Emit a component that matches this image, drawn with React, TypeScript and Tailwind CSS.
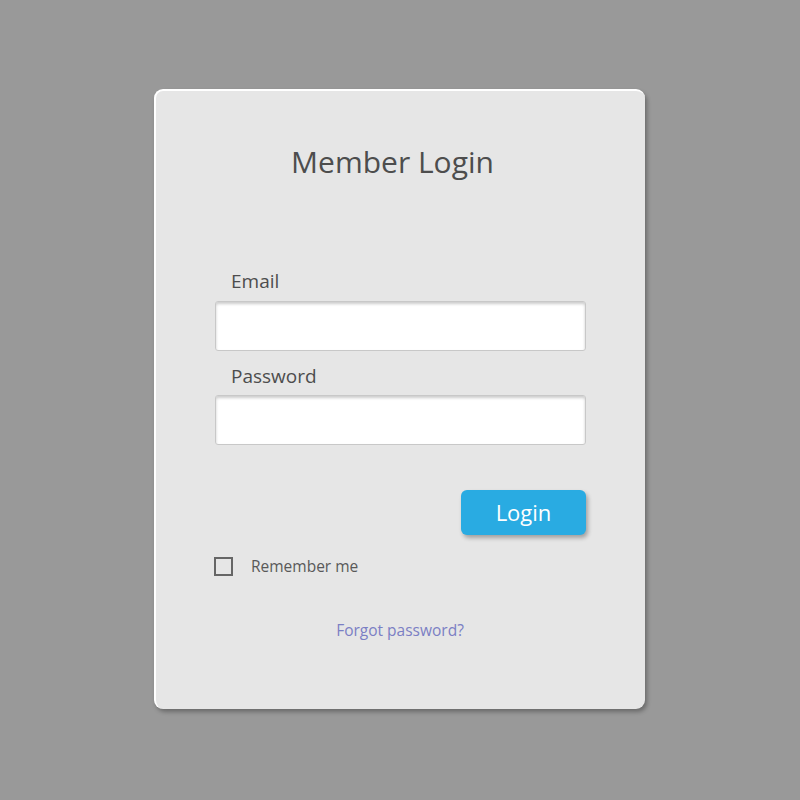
import React from 'react';

const App = () => {
  return (
    <div className="w-[800px] h-[800px] bg-[#999999] pt-[89px] pl-[154px]" style={{ fontFamily: '"Open Sans", "Noto Sans", sans-serif' }}>
      <div className="w-[491px] h-[620px] bg-[#e6e6e6] rounded-[9px] border-t-2 border-l-2 border-white shadow-[2px_3px_4px_rgba(0,0,0,0.3)] flex flex-col px-[59px]">
        <h1 className="text-center text-[30px] text-[#4d4d4d] mt-[56px] pr-[16px] leading-none">Member Login</h1>

        <label className="text-[19px] text-[#4d4d4d] mt-[95px] ml-[16px] leading-none">Email</label>
        <input className="mt-[10px] h-[50px] w-[371px] bg-white border border-[#c8c8c8] rounded-[3px] shadow-[inset_0_2px_3px_rgba(0,0,0,0.2)] outline-none" />

        <label className="text-[19px] text-[#4d4d4d] mt-[16px] ml-[16px] leading-none">Password</label>
        <input type="password" className="mt-[9px] h-[50px] w-[371px] bg-white border border-[#c8c8c8] rounded-[3px] shadow-[inset_0_2px_3px_rgba(0,0,0,0.2)] outline-none" />

        <div className="flex justify-end w-[371px] mt-[45px]">
          <button className="w-[125px] h-[45px] bg-[#29abe2] rounded-[6px] text-white text-[22px] shadow-[2px_3px_4px_rgba(0,0,0,0.3)]">
            Login
          </button>
        </div>

        <div className="flex items-center mt-[20px] -ml-px">
          <span className="w-[19px] h-[19px] border-2 border-[#666666]" />
          <span className="ml-[18px] text-[15.5px] text-[#595959]">Remember me</span>
        </div>

        <div className="w-[370px] text-center mt-[41px] text-[15.5px] text-[#7b7fc4]">Forgot password?</div>
      </div>
    </div>
  );
};

export default App;
